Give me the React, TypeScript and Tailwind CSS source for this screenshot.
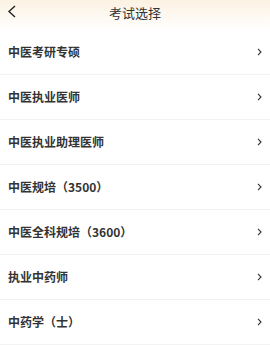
import React from "react";

const items = [
  "中医考研专硕",
  "中医执业医师",
  "中医执业助理医师",
  "中医规培（3500）",
  "中医全科规培（3600）",
  "执业中药师",
  "中药学（士）",
];

export default function App() {
  return (
    <div
      className="w-[270px] h-[345px] overflow-hidden bg-white"
      style={{ fontFamily: '"Noto Sans CJK SC", "Noto Sans", sans-serif' }}
    >
      <div className="h-[30px] bg-gradient-to-b from-[#fcf2e2] to-white">
        <div className="relative h-6 flex items-center justify-center">
          <svg
            className="absolute left-[7px] top-[5px]"
            width="10"
            height="13"
            viewBox="0 0 10 13"
            fill="none"
          >
            <path d="M8 1L2 6.5L8 12" stroke="#222" strokeWidth="1.4" />
          </svg>
          <span className="text-[13px] leading-none text-[#333] pt-[1px]">考试选择</span>
        </div>
      </div>
      <div>
        {items.map((t) => (
          <div
            key={t}
            className="h-[45px] flex items-center justify-between pl-2 pr-[8px] border-b border-[#f3f3f3]"
          >
            <span className="text-[12px] font-semibold text-[#333] leading-none">{t}</span>
            <svg width="5" height="8" viewBox="0 0 5 8" fill="none">
              <path d="M1 0.8L4 4L1 7.2" stroke="#333" strokeWidth="1.1" />
            </svg>
          </div>
        ))}
      </div>
    </div>
  );
}
